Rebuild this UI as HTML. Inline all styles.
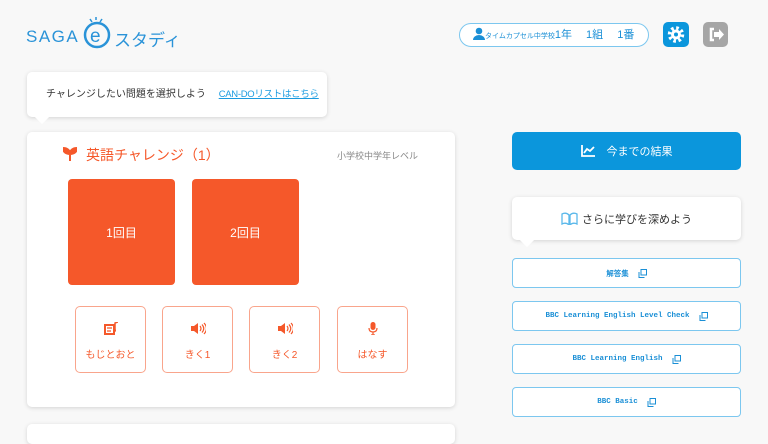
<!DOCTYPE html>
<html><head><meta charset="utf-8"><style>
*{margin:0;padding:0;box-sizing:border-box}
body{width:768px;height:429px;background:#f8f8f8;font-family:"Liberation Sans","Noto Sans CJK JP",sans-serif;position:relative;overflow:hidden}
.a{position:absolute}
.card{background:#fff;border-radius:5px;box-shadow:0 1px 4px rgba(0,0,0,.15)}
.tile{background:#f5582a;border-radius:4px;color:#fff;font-size:12px;display:flex;align-items:center;justify-content:center}
.sb{border:1px solid #f9a58c;border-radius:5px;background:#fff;color:#f5582a;font-size:10px;text-align:center}
.sb svg{display:block;margin:15px auto 0}
.lk{border:1px solid #7cc7ef;border-radius:4px;background:#fff;color:#1a8fd6;font-size:7.5px;font-weight:bold;display:flex;align-items:center;justify-content:center;height:30px;left:512px;width:229px;font-family:"Liberation Mono","Noto Sans CJK JP",monospace}
.lk svg{margin-left:9px}
.tail{position:absolute;width:10px;height:10px;background:#fff;transform:rotate(45deg)}
</style></head><body>
<div class="a" style="left:26px;top:27px;color:#2a93d8;font-size:17px;letter-spacing:1.5px">SAGA</div>
<svg class="a" style="left:82px;top:16px" width="32" height="34"><circle cx="15" cy="19" r="12" fill="none" stroke="#2a93d8" stroke-width="2.5"/><text x="8" y="26" font-size="19" fill="#2a93d8" font-family="Liberation Sans">e</text><path d="M10 6l-2-3M14 4l0-3M18 6l2-3" stroke="#2a93d8" stroke-width="1.5"/></svg>
<div class="a" style="left:114px;top:26px;color:#2a93d8;font-size:17px">スタディ</div>

<div class="a" style="left:459px;top:23px;width:190px;height:24px;border:1px solid #7cc7ef;border-radius:12px;background:#fff;color:#1a8fd6;font-size:11px;line-height:22px;padding-left:13px;white-space:nowrap"><svg width="12" height="13" style="vertical-align:-2px"><circle cx="6" cy="4" r="3.3" fill="#1a8fd6"/><path d="M0 13a6 5 0 0 1 12 0z" fill="#1a8fd6"/></svg><span style="font-size:7px">タイムカプセル中学校</span>1年　 1組　 1番</div>
<div class="a" style="left:663px;top:22px;width:26px;height:25px;background:#0b96dc;border-radius:5px"><svg width="26" height="25"><circle cx="13" cy="12.5" r="6.5" fill="none" stroke="#fff" stroke-width="3.5" stroke-dasharray="2.6 2.5"/><circle cx="13" cy="12.5" r="5" fill="#fff"/><circle cx="13" cy="12.5" r="2" fill="#0b96dc"/></svg></div>
<div class="a" style="left:703px;top:22px;width:25px;height:25px;background:#a6a6a6;border-radius:5px"><svg width="25" height="25"><path d="M11 7H8v11h3" fill="none" stroke="#fff" stroke-width="2.5"/><path d="M11 10h5V7l5 5.5-5 5.5v-3h-5z" fill="#fff"/></svg></div>

<div class="a card" style="left:27px;top:72px;width:300px;height:45px;font-size:10px;color:#333;line-height:45px;padding-left:19px;white-space:nowrap">チャレンジしたい問題を選択しよう　 <span style="color:#1a9be0;text-decoration:underline;font-size:9.5px;letter-spacing:-0.3px">CAN-DOリストはこちら</span></div>
<div class="tail" style="left:37px;top:112px"></div>

<div class="a card" style="left:27px;top:132px;width:428px;height:275px"></div>
<div class="a card" style="left:27px;top:424px;width:428px;height:20px"></div>
<svg class="a" style="left:63px;top:147px" width="14" height="14"><path d="M7 14V7M7 7C7 3 4 1 0 1 0 5 3 7 7 7M7 7c0-4 3-6 7-6 0 4-3 6-7 6" fill="#f5582a" stroke="#f5582a" stroke-width="2"/></svg>
<div class="a" style="left:86px;top:145px;color:#f5582a;font-size:14px">英語チャレンジ（1）</div>
<div class="a" style="left:337px;top:149px;color:#888;font-size:9px">小学校中学年レベル</div>
<div class="a tile" style="left:68px;top:179px;width:107px;height:106px">1回目</div>
<div class="a tile" style="left:192px;top:179px;width:107px;height:106px">2回目</div>
<div class="a sb" style="left:75px;top:306px;width:71px;height:67px"><svg width="14" height="13"><rect x="1" y="3" width="9" height="9" fill="none" stroke="#f5582a" stroke-width="2"/><path d="M3 6h5M3 9h4" stroke="#f5582a" stroke-width="1.3"/><path d="M11 8V1l3-1" stroke="#f5582a" stroke-width="1.5" fill="none"/><circle cx="10.5" cy="8.5" r="1.5" fill="#f5582a"/></svg><div style="margin-top:11px">もじとおと</div></div>
<div class="a sb" style="left:162px;top:306px;width:71px;height:67px"><svg width="16" height="13"><path d="M1 4h3l4-3v11L4 9H1z" fill="#f5582a"/><path d="M10 4q2 2.5 0 5M12 2.5q3.5 4 0 8M14 1q5 5.5 0 11" fill="none" stroke="#f5582a" stroke-width="1.2"/></svg><div style="margin-top:11px">きく1</div></div>
<div class="a sb" style="left:249px;top:306px;width:71px;height:67px"><svg width="16" height="13"><path d="M1 4h3l4-3v11L4 9H1z" fill="#f5582a"/><path d="M10 4q2 2.5 0 5M12 2.5q3.5 4 0 8M14 1q5 5.5 0 11" fill="none" stroke="#f5582a" stroke-width="1.2"/></svg><div style="margin-top:11px">きく2</div></div>
<div class="a sb" style="left:337px;top:306px;width:71px;height:67px"><svg width="10" height="13"><rect x="2.5" y="0" width="5" height="8" rx="2.5" fill="#f5582a"/><path d="M1 6q0 4 4 4t4-4M5 10v3M3 13h4" fill="none" stroke="#f5582a" stroke-width="1.2"/></svg><div style="margin-top:11px">はなす</div></div>

<div class="a" style="left:512px;top:132px;width:229px;height:38px;background:#0b96dc;border-radius:5px;color:#fff;font-size:11px;display:flex;align-items:center;justify-content:center"><svg width="14" height="12" style="margin-right:12px"><path d="M1 0v11h13M3 8l3-4 3 2 4-4" fill="none" stroke="#fff" stroke-width="1.8"/></svg>今までの結果</div>
<div class="a card" style="left:512px;top:197px;width:229px;height:43px;font-size:11px;color:#333;display:flex;align-items:center;justify-content:center"><svg width="17" height="13" style="margin-right:4px"><path d="M1 2q4-2 7 1v10q-3-3-7-1zM16 2q-4-2-7 1v10q3-3 7-1z" fill="none" stroke="#5ab8ea" stroke-width="1.3"/></svg>さらに学びを深めよう</div>
<div class="tail" style="left:522px;top:235px"></div>
<div class="a lk" style="top:258px">解答集<svg width="9" height="9"><rect x="3" y="0.5" width="5.5" height="5.5" fill="none" stroke="#1a8fd6"/><path d="M1 3v5.5h5.5" fill="none" stroke="#1a8fd6"/></svg></div>
<div class="a lk" style="top:301px">BBC Learning English Level Check<svg width="9" height="9"><rect x="3" y="0.5" width="5.5" height="5.5" fill="none" stroke="#1a8fd6"/><path d="M1 3v5.5h5.5" fill="none" stroke="#1a8fd6"/></svg></div>
<div class="a lk" style="top:344px">BBC Learning English<svg width="9" height="9"><rect x="3" y="0.5" width="5.5" height="5.5" fill="none" stroke="#1a8fd6"/><path d="M1 3v5.5h5.5" fill="none" stroke="#1a8fd6"/></svg></div>
<div class="a lk" style="top:387px">BBC Basic<svg width="9" height="9"><rect x="3" y="0.5" width="5.5" height="5.5" fill="none" stroke="#1a8fd6"/><path d="M1 3v5.5h5.5" fill="none" stroke="#1a8fd6"/></svg></div>
</body></html>
